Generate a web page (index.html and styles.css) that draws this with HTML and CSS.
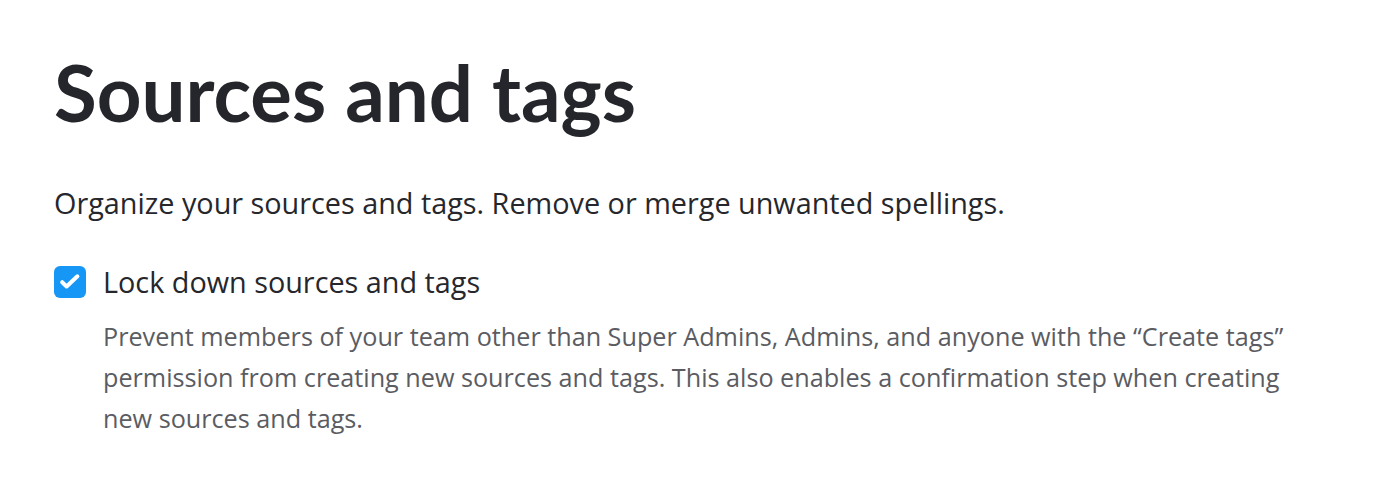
FILE: index.html
```html
<!DOCTYPE html>
<html lang="en">

<head>
    <meta charset="UTF-8">
    <meta name="viewport" content="width=device-width, initial-scale=1.0">
    <title>Sources and tags</title>
    <link rel="stylesheet" href="styles.css">
</head>

<body>
    <main class="settings">
        <h1 class="settings-title">Sources and tags</h1>

        <p class="settings-intro">Organize your sources and tags. Remove or merge unwanted spellings.</p>

        <!-- Lock down option -->
        <div class="option">
            <label class="option-row">
                <span class="checkbox is-checked">
                    <svg viewBox="0 0 32 32" width="32" height="32" aria-hidden="true">
                        <path d="M8.2 16.2l4.4 4.3 10.8-10.2" fill="none" stroke="#fff" stroke-width="4"
                            stroke-linecap="round" stroke-linejoin="round" />
                    </svg>
                </span>
                <span class="option-label">Lock down sources and tags</span>
            </label>
            <p class="option-help">Prevent members of your team other than Super Admins, Admins, and anyone with the
                &ldquo;Create tags&rdquo; permission from creating new sources and tags. This also enables a
                confirmation step when creating new sources and tags.</p>
        </div>
    </main>
</body>

</html>
```
FILE: styles.css
```css
body {
    margin: 0;
    background-color: #fff;
    font-family: "Open Sans", "Noto Sans", sans-serif;
    color: #26272c;
}

.settings {
    padding: 45px 54px 0;
}

.settings-title {
    margin: 0;
    font-family: Lato, "Open Sans", sans-serif;
    font-size: 78px;
    font-weight: 700;
    line-height: 94px;
    color: #24262b;
}

.settings-intro {
    margin: 44px 0 0;
    font-size: 28.8px;
    line-height: 39px;
}

.option {
    margin-top: 40px;
}

.option-row {
    display: flex;
    align-items: center;
    gap: 17px;
    cursor: pointer;
}

/* custom checkbox */
.checkbox {
    display: flex;
    width: 32px;
    height: 32px;
    border-radius: 6px;
    background-color: #cfd2d6;
}

.checkbox.is-checked {
    background-color: #1797f5;
}

.option-label {
    font-size: 28.8px;
    line-height: 39px;
}

.option-help {
    max-width: 1190px;
    margin: 15px 0 0 49px;
    font-size: 25.2px;
    line-height: 41px;
    color: #5b5c62;
}
```
